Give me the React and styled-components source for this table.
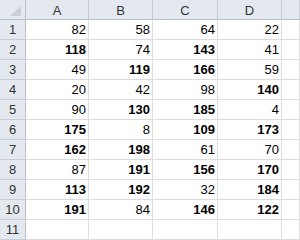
import React from "react";
import styled, { createGlobalStyle } from "styled-components";

const GlobalStyle = createGlobalStyle`
  body {
    margin: 0;
    background: #ffffff;
    overflow: hidden;
  }
`;

const Sheet = styled.div`
  display: grid;
  grid-template-columns: 26px 63px 64px 65px 64px 1fr;
  grid-auto-rows: 20px;
  width: 300px;
  height: 240px;
  overflow: hidden;
  font-family: "Liberation Sans", Arial, sans-serif;
  font-size: 13px;
  color: #000;
`;

const Corner = styled.div`
  box-sizing: border-box;
  position: relative;
  background: #e4e9f0;
  border-right: 1px solid #b6bfcb;
  border-bottom: 1px solid #b6bfcb;
`;

const CornerMark = styled.div`
  position: absolute;
  right: 4px;
  bottom: 3px;
  width: 0;
  height: 0;
  border-left: 11px solid transparent;
  border-bottom: 10px solid #cbd0d6;
`;

const ColHead = styled.div`
  box-sizing: border-box;
  display: flex;
  align-items: center;
  justify-content: center;
  background: #e4e9f0;
  color: #333;
  border-right: 1px solid #c5ccd6;
  border-bottom: 1px solid #b6bfcb;
  padding-top: 1px;
`;

const RowHead = styled.div`
  box-sizing: border-box;
  display: flex;
  align-items: center;
  justify-content: center;
  background: #e4e9f0;
  color: #333;
  border-right: 1px solid #b6bfcb;
  border-bottom: 1px solid #c5ccd6;
`;

const Cell = styled.div`
  box-sizing: border-box;
  display: flex;
  align-items: center;
  justify-content: flex-end;
  padding-right: 2px;
  border-right: 1px solid #dadcdd;
  border-bottom: 1px solid #dadcdd;
  font-weight: ${(p) => (p.bold ? 700 : 400)};
`;

const data = [
  [82, 58, 64, 22],
  [118, 74, 143, 41],
  [49, 119, 166, 59],
  [20, 42, 98, 140],
  [90, 130, 185, 4],
  [175, 8, 109, 173],
  [162, 198, 61, 70],
  [87, 191, 156, 170],
  [113, 192, 32, 184],
  [191, 84, 146, 122],
];

const App = () => (
  <>
    <GlobalStyle />
    <Sheet>
      <Corner>
        <CornerMark />
      </Corner>
      {["A", "B", "C", "D", ""].map((c, i) => (
        <ColHead key={i}>{c}</ColHead>
      ))}
      {data.map((row, r) => (
        <React.Fragment key={r}>
          <RowHead>{r + 1}</RowHead>
          {row.map((v, c) => (
            <Cell key={c} bold={v > 100}>
              {v}
            </Cell>
          ))}
          <Cell />
        </React.Fragment>
      ))}
      <RowHead>11</RowHead>
      {[0, 1, 2, 3, 4].map((c) => (
        <Cell key={c} />
      ))}
    </Sheet>
  </>
);

export default App;
